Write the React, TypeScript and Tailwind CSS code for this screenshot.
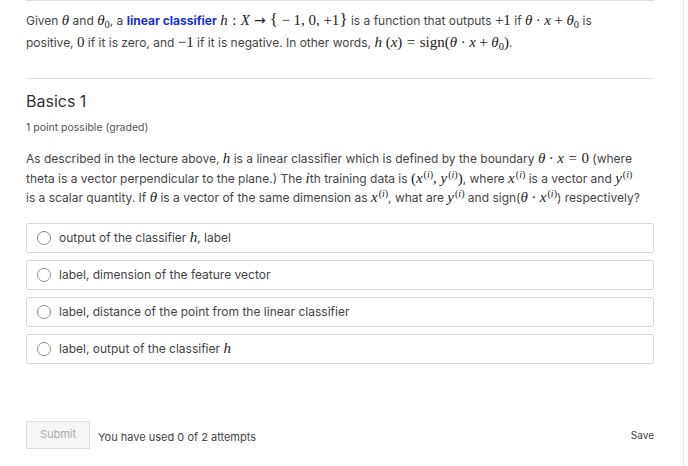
import React from 'react';

// math bits, rendered in a serif italic like MathJax
const M: React.FC<{ children: React.ReactNode }> = ({ children }) => (
  <span
    className="italic text-[15px] leading-none text-[#222] whitespace-nowrap"
    style={{ fontFamily: '"Liberation Serif", "DejaVu Serif", serif' }}
  >
    {children}
  </span>
);

const R: React.FC<{ children: React.ReactNode }> = ({ children }) => (
  <span className="not-italic">{children}</span>
);

// binary operator and relation with MathJax-like spacing
const Op: React.FC<{ c: string }> = ({ c }) => <span className="not-italic px-[3.5px]">{c}</span>;
const Rel: React.FC<{ c: string }> = ({ c }) => <span className="not-italic px-[4.5px]">{c}</span>;

const Sup: React.FC = () => (
  <sup className="text-[10px] ml-[1px]">
    <R>(</R>i<R>)</R>
  </sup>
);

const Sub0: React.FC = () => <sub className="not-italic text-[10.5px]">0</sub>;

const options: React.ReactNode[] = [
  <>output of the classifier <M>h</M>, label</>,
  <>label, dimension of the feature vector</>,
  <>label, distance of the point from the linear classifier</>,
  <>label, output of the classifier <M>h</M></>,
];

export default function App() {
  return (
    <div
      className="w-[688px] h-[466px] bg-white text-[#454545] overflow-hidden"
      style={{ fontFamily: 'Inter, "Noto Sans", sans-serif' }}
    >
      <div className="w-[684px] h-full border-r border-[#e4e4e4] pl-[26px] pr-[29px]">
        {/* intro */}
        <div className="border-t border-[#e2e2e2] border-b pt-[9px] pb-[24px] text-[12px] leading-[22px] whitespace-nowrap">
          <p>
            Given <M>θ</M> and <M>θ<Sub0 /></M>, a{' '}
            <span className="font-bold text-[#1330d1]">linear classifier</span>{' '}
            <M>
              h<Rel c=":" />X
              <span className="not-italic px-[4px] text-[14px]" style={{ fontFamily: '"DejaVu Sans", sans-serif' }}>
                →
              </span>
              <R>
                <span className="text-[17px]">{'{'}</span>
                <Op c="−" />1, 0, +1<span className="text-[17px]">{'}'}</span>
              </R>
            </M>{' '}
            is a function that outputs <M><R>+1</R></M> if{' '}
            <M>
              θ<Op c="·" />x<Op c="+" />θ<Sub0 />
            </M>{' '}
            is
            <br />
            positive, <M><R>0</R></M> if it is zero, and <M><R>−1</R></M> if it is negative. In other words,{' '}
            <M>
              h <R>(</R>x<R>)</R>
              <Rel c="=" />
              <R>sign(</R>θ<Op c="·" />x<Op c="+" />θ<Sub0 />
              <R>)</R>
            </M>
            .
          </p>
        </div>

        {/* problem */}
        <h2 className="text-[16px] text-[#333] mt-[12px] leading-[20px]">Basics 1</h2>
        <div className="text-[10.5px] text-[#555] mt-[10px] leading-[14px]">1 point possible (graded)</div>

        <p className="text-[12px] leading-[19.5px] mt-[14px] whitespace-nowrap">
          As described in the lecture above, <M>h</M> is a linear classifier which is defined by the boundary{' '}
          <M>
            θ<Op c="·" />x<Rel c="=" />
            <R>0</R>
          </M>{' '}
          (where
          <br />
          theta is a vector perpendicular to the plane.) The <M>i</M>th training data is{' '}
          <M>
            <R>(</R>x<Sup />
            <R>, </R>y<Sup />
            <R>)</R>
          </M>
          , where <M>x<Sup /></M> is a vector and <M>y<Sup /></M>
          <br />
          is a scalar quantity. If <M>θ</M> is a vector of the same dimension as <M>x<Sup /></M>, what are{' '}
          <M>y<Sup /></M> and sign(
          <M>
            θ<Op c="·" />x<Sup />
          </M>
          ) respectively?
        </p>

        <div className="flex flex-col gap-[7px] mt-[15px]">
          {options.map((o, i) => (
            <label
              key={i}
              className="h-[30px] border border-[#dadada] rounded-[2px] flex items-center pl-[10px] text-[12px] text-[#444]"
            >
              <span className="w-[14px] h-[14px] rounded-full border border-[#8c8c8c] mr-[8px] shrink-0" />
              <span>{o}</span>
            </label>
          ))}
        </div>

        {/* actions */}
        <div className="flex items-center mt-[57px]">
          <button className="w-[64px] h-[28px] bg-[#f6f6f6] border border-[#e0e0e0] text-[#aaa] text-[11px]">
            Submit
          </button>
          <span className="ml-[8px] text-[11px] text-[#444] mt-[5px]">You have used 0 of 2 attempts</span>
          <span className="ml-auto text-[10px] text-[#444] mt-[1px]">Save</span>
        </div>
      </div>
    </div>
  );
}
